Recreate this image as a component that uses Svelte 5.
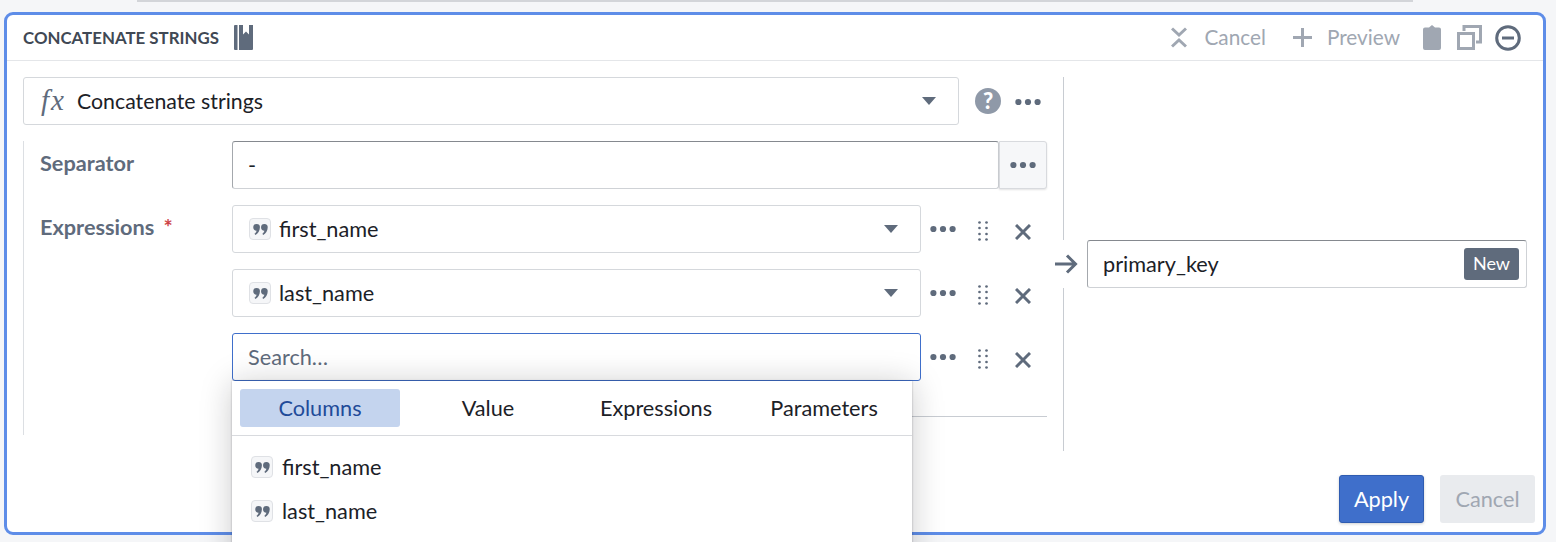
<script>
  const expressions = ['first_name', 'last_name', null];
  const tabs = ['Columns', 'Value', 'Expressions', 'Parameters'];
  const columns = ['first_name', 'last_name'];
</script>

{#snippet quote()}
  <span class="quote">
    <svg width="15" height="13" viewBox="0 0 15 13">
      <path d="M3.600 1a3.300 3.300 0 0 1 3.300 3.500c0 3.300-2 6.100-4.500 7.500l-.9-1.200c1.200-.9 1.900-2 2.100-3.100A3.350 3.350 0 0 1 3.600 1z" />
      <path d="M11.400 1a3.300 3.300 0 0 1 3.300 3.500c0 3.300-2 6.100-4.500 7.500l-.9-1.200c1.200-.9 1.900-2 2.100-3.100a3.350 3.350 0 0 1 0-6.700z" />
    </svg>
  </span>
{/snippet}

{#snippet more(cls = '')}
  <svg class="more {cls}" width="26" height="8" viewBox="0 0 26 8">
    <circle cx="3.400" cy="4" r="3.100" /><circle cx="13" cy="4" r="3.100" /><circle cx="22.600" cy="4" r="3.100" />
  </svg>
{/snippet}

{#snippet caret()}
  <svg class="caret" width="14" height="8" viewBox="0 0 14 8"><path d="M0 0h14L7 8z" /></svg>
{/snippet}

<div class="page">
  <div class="above"></div>
  <section class="panel">
    <header class="head">
      <h1>Concatenate strings</h1>
      <svg class="book" width="19" height="25" viewBox="0 0 19 25">
        <path d="M1 0h2.500v25H1a1 1 0 0 1-1-1V1a1 1 0 0 1 1-1z" />
        <path d="M5 0h4v9.500l3-3 3 3V0h4v24a1 1 0 0 1-1 1H5z" />
      </svg>
      <div class="actions">
        <svg class="collapse" width="16" height="21" viewBox="0 0 16 21">
          <path d="M1 1.500l7 6.500 7-6.500M1 19.500l7-6.500 7 6.500" />
        </svg>
        <span class="action-label first">Cancel</span>
        <svg class="plus" width="19" height="19" viewBox="0 0 19 19"><path d="M9.500 0v19M0 9.500h19" /></svg>
        <span class="action-label second">Preview</span>
        <svg class="clip" width="18" height="25" viewBox="0 0 18 25">
          <path d="M6 2.500 9 0l3 2.500h4a2 2 0 0 1 2 2V23a2 2 0 0 1-2 2H2a2 2 0 0 1-2-2V4.500a2 2 0 0 1 2-2z" />
        </svg>
        <svg class="dup" width="25" height="25" viewBox="0 0 25 25">
          <path d="M7 6V1.500h16.500V17H19" />
          <rect x="1.500" y="8.500" width="15" height="15" />
        </svg>
        <svg class="remove" width="26" height="26" viewBox="0 0 26 26">
          <circle cx="13" cy="13" r="11.300" /><path d="M7 13h12" />
        </svg>
      </div>
    </header>

    <div class="body">
      <div class="form">
        <div class="fn-row">
          <div class="select fn">
            <span class="fx">fx</span>
            <span class="value">Concatenate strings</span>
            {@render caret()}
          </div>
          <svg class="help" width="26" height="26" viewBox="0 0 26 26">
            <circle cx="13" cy="13" r="13" />
            <text x="13" y="20.500">?</text>
          </svg>
          {@render more('fn-more')}
        </div>

        <div class="args">
          <div class="arg">
            <div class="label sep-label">Separator</div>
            <div class="sep-field">
              <div class="input sep-input"><span class="value">-</span></div>
              <div class="sep-btn">{@render more()}</div>
            </div>
          </div>

          <div class="arg">
            <div class="label">Expressions <span class="star">*</span></div>
            <div class="expr-list">
              {#each expressions as name}
                <div class="expr-row">
                  {#if name}
                    <div class="select expr">
                      {@render quote()}
                      <span class="value">{name}</span>
                      {@render caret()}
                    </div>
                  {:else}
                    <div class="search"><span class="value">Search…</span></div>
                  {/if}
                  {@render more('row-more')}
                  <svg class="drag" width="10" height="20" viewBox="0 0 10 20">
                    {#each [1.500, 7, 13, 18.500] as y}
                      <circle cx="1.500" cy={y} r="1.350" /><circle cx="8.500" cy={y} r="1.350" />
                    {/each}
                  </svg>
                  <svg class="cross" width="16" height="16" viewBox="0 0 16 16"><path d="M1 1l14 14M15 1L1 15" /></svg>
                </div>
              {/each}
            </div>
          </div>

          <div class="rule"></div>

          <div class="popover">
            <div class="tabs">
              {#each tabs as tab, i}
                <div class="tab" class:active={i === 0}>{tab}</div>
              {/each}
            </div>
            <div class="col-list">
              {#each columns as col}
                <div class="col-item">{@render quote()}<span class="value">{col}</span></div>
              {/each}
            </div>
          </div>
        </div>
      </div>

      <div class="output">
        <svg class="arrow" width="24" height="48" viewBox="0 0 24 48">
          <path d="M1 24h20M13 15.500l8.500 8.500-8.500 8.500" />
        </svg>
        <div class="input out-input">
          <span class="value">primary_key</span>
          <span class="badge">New</span>
        </div>
      </div>
    </div>

    <footer class="foot">
      <button class="apply">Apply</button>
      <button class="cancel">Cancel</button>
    </footer>
  </section>
</div>

<style>
  :global(body) {
    margin: 0;
    background: #f5f6f8;
  }

  .page {
    height: 542px;
    overflow: hidden;
    font-family: Lato, "Open Sans", sans-serif;
    font-size: 21.700px;
    color: #1c2127;
  }

  .above {
    height: 2px;
    margin: 0 143px 10px 137px;
    background: #d3d5d9;
  }

  .panel {
    width: 1542px;
    margin-left: 4px;
    box-sizing: border-box;
    background: #fff;
    border: 3px solid #5e8de8;
    border-radius: 9px;
  }

  /* header */
  .head {
    display: flex;
    align-items: center;
    height: 45px;
    padding: 0 22px 0 16px;
    border-bottom: 1px solid #e4e6e9;
  }

  h1 {
    margin: 0 15px 0 0;
    font-size: 16.850px;
    font-weight: 700;
    text-transform: uppercase;
    color: #404854;
  }

  .book {
    fill: #5f6b7c;
  }

  .actions {
    display: flex;
    align-items: center;
    margin-left: auto;
    color: #a0a7b2;
  }

  .action-label {
    font-size: 20.800px;
  }

  .action-label.first {
    margin: 0 27px 2px 17px;
  }

  .action-label.second {
    margin: 0 23px 2px 15px;
  }

  .collapse,
  .plus,
  .dup {
    fill: none;
    stroke: #a0a7b2;
    stroke-width: 3;
  }

  .clip {
    fill: #a0a7b2;
  }

  .dup {
    margin-left: 16px;
  }

  .remove {
    margin-left: 13px;
    fill: none;
    stroke: #5f6b7c;
    stroke-width: 3;
  }

  /* form */
  .body {
    display: flex;
    padding: 16px 0 0 16px;
  }

  .form {
    width: 1024px;
    padding-bottom: 16px;
  }

  .fn-row {
    display: flex;
    align-items: center;
    margin-bottom: 16px;
  }

  .select {
    display: flex;
    align-items: center;
    height: 48px;
    box-sizing: border-box;
    background: #fff;
    border: 1px solid #d5d8dc;
    border-radius: 3px;
  }

  .fn {
    width: 936px;
    padding: 0 22px 0 17px;
  }

  .fn .value {
    font-size: 21.300px;
  }

  .fx {
    width: 36px;
    font-family: "Liberation Serif", serif;
    font-style: italic;
    font-size: 29px;
    letter-spacing: 2px;
    color: #5f6b7c;
    margin-bottom: 2px;
  }

  .value {
    margin-bottom: 1px;
  }

  .select .value {
    flex: 1;
  }

  .caret {
    fill: #5f6b7c;
  }

  .more {
    fill: #5f6b7c;
    flex: none;
  }

  .help {
    margin-left: 16px;
    fill: #8f99a8;
  }

  .help text {
    fill: #fff;
    font-size: 22px;
    font-weight: 900;
    text-anchor: middle;
  }

  .fn-more {
    margin: 2px 0 0 14px;
  }

  .args {
    position: relative;
    padding: 0 0 18px 16px;
    border-left: 1px solid #dcdfe3;
  }

  .arg {
    display: flex;
    margin-bottom: 16px;
  }

  .label {
    width: 192px;
    flex: none;
    padding-top: 9px;
    font-weight: 700;
    color: #5f6b7c;
    box-sizing: border-box;
  }

  .star {
    margin-left: 4px;
    color: #cd4246;
  }

  .sep-field {
    display: flex;
    flex: 1;
  }

  .input {
    display: flex;
    align-items: center;
    height: 48px;
    box-sizing: border-box;
    background: #fff;
    border: 1px solid #cfd2d6;
    border-top-color: #85898f;
    border-left-color: #a4a8ad;
    border-radius: 3px;
    padding-left: 15px;
  }

  .sep-input {
    flex: 1;
  }

  .sep-btn {
    display: flex;
    align-items: center;
    justify-content: center;
    width: 48px;
    height: 48px;
    box-sizing: border-box;
    background: #f6f7f9;
    border: 1px solid #d8dade;
    border-radius: 0 3px 3px 0;
    box-shadow: 0 1px 2px rgba(17, 20, 24, 0.12);
  }

  .expr-list {
    display: flex;
    flex-direction: column;
    gap: 16px;
  }

  .expr-row {
    display: flex;
    align-items: center;
  }

  .expr {
    width: 689px;
    padding: 0 22px 0 16px;
  }

  .search {
    display: flex;
    align-items: center;
    width: 689px;
    height: 48px;
    box-sizing: border-box;
    padding-left: 15px;
    color: #5f6b7c;
    border: 1.500px solid #3f6fcb;
    border-radius: 3px;
  }

  .quote {
    display: flex;
    align-items: center;
    justify-content: center;
    flex: none;
    width: 22px;
    height: 22px;
    margin-right: 9px;
    box-sizing: border-box;
    background: #f5f6f8;
    border: 1px solid #dfe1e5;
    border-radius: 4px;
    fill: #5f6b7c;
  }

  .expr .quote {
    margin-right: 8px;
  }

  .row-more {
    margin-left: 9px;
  }

  .drag {
    margin: 4px 0 0 22px;
    fill: #5f6b7c;
  }

  .cross {
    margin: 6px 0 0 27px;
    fill: none;
    stroke: #5f6b7c;
    stroke-width: 3;
  }

  .rule {
    height: 1px;
    margin: 35px 0 0 192px;
    background: #c8ccd2;
  }

  .arg:nth-child(2) {
    margin-bottom: 0;
  }

  .popover {
    position: absolute;
    left: 208px;
    top: 240px;
    width: 680px;
    height: 300px;
    background: #fff;
    box-shadow: 0 2px 30px rgba(17, 20, 24, 0.22), 0 0 2px rgba(17, 20, 24, 0.3);
  }

  .tabs {
    display: grid;
    grid-template-columns: repeat(4, 160px);
    gap: 8px;
    padding: 8px;
    border-bottom: 1px solid #d8dade;
  }

  .tab {
    height: 38px;
    line-height: 38px;
    text-align: center;
    border-radius: 3px;
  }

  .tab.active {
    background: #c4d4ee;
    color: #1f4b99;
  }

  .col-list {
    padding: 9px 0 0 19px;
  }

  .col-item {
    display: flex;
    align-items: center;
    height: 44px;
  }

  /* output */
  .output {
    position: relative;
    display: flex;
    align-items: center;
    margin-left: 16px;
    padding-left: 23px;
    border-left: 1px solid #c8ccd2;
  }

  .arrow {
    position: absolute;
    left: -10px;
    top: 50%;
    margin-top: -24px;
    background: #fff;
    fill: none;
    stroke: #5f6b7c;
    stroke-width: 3;
  }

  .out-input {
    justify-content: space-between;
    width: 440px;
    padding-right: 7px;
  }

  .badge {
    height: 32px;
    line-height: 31px;
    padding: 0 9px;
    background: #5f6b7c;
    border-radius: 3px;
    color: #fff;
    font-size: 18px;
  }

  /* footer */
  .foot {
    display: flex;
    justify-content: flex-end;
    gap: 16px;
    padding: 24px 8px 9px 0;
  }

  button {
    height: 48px;
    box-sizing: border-box;
    padding: 0 0 1px;
    font: inherit;
    border-radius: 3px;
  }

  .apply {
    width: 85px;
    background: #3f6fcb;
    border: 1px solid #2f5cb1;
    color: #fff;
    box-shadow: 0 1px 3px rgba(17, 20, 24, 0.2);
  }

  .cancel {
    width: 95px;
    background: #e9ebee;
    border: none;
    color: #a0a7b2;
  }
</style>
